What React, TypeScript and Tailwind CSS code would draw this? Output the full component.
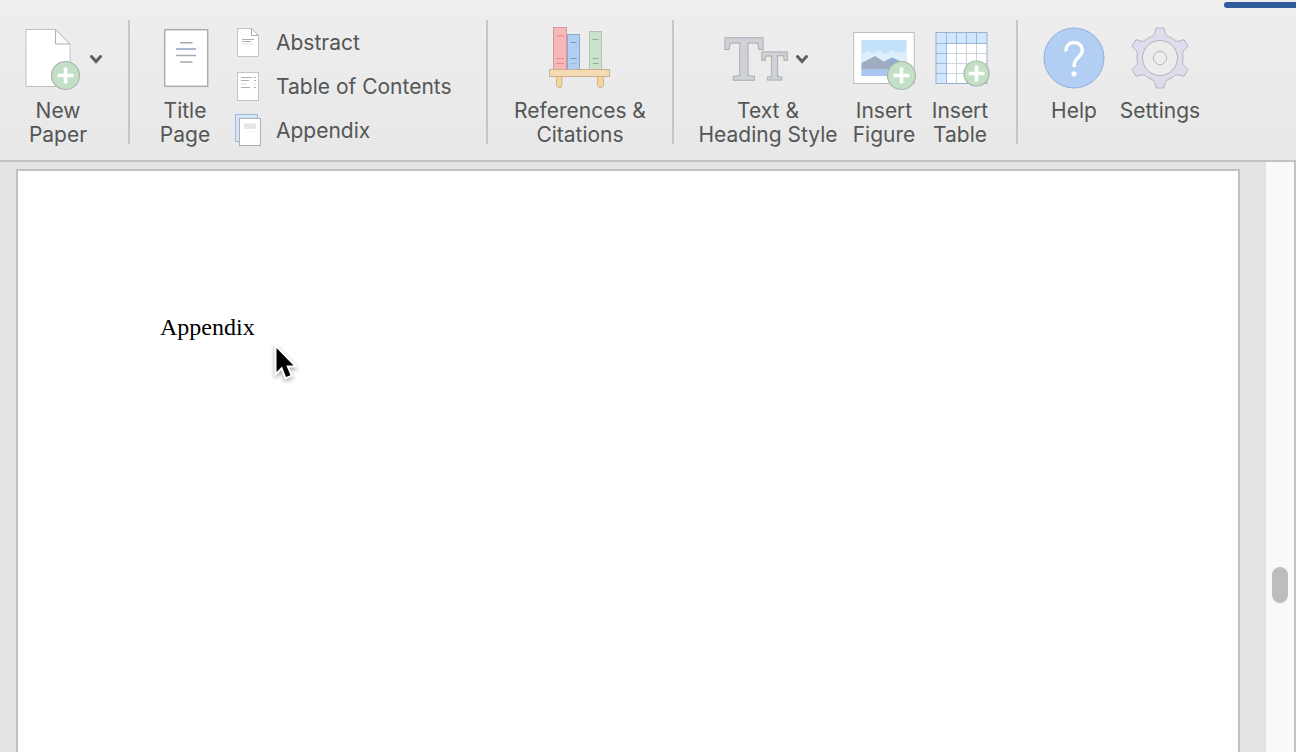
import type { ReactNode } from "react"

function Chevron() {
  return (
    <svg width="16" height="79" viewBox="0 0 16 79" aria-hidden="true">
      <path d="M1.5 36.5 L6 41.5 L10.5 36.5" fill="none" stroke="#5c5e5e" strokeWidth="3" strokeLinecap="round" />
    </svg>
  )
}

function PlusBadge({ cx, cy, r = 14 }: { cx: number; cy: number; r?: number }) {
  return (
    <g>
      <circle cx={cx} cy={cy} r={r} fill="#c3dfc5" stroke="#aab5ac" strokeWidth="1.2" />
      <path d={`M${cx - 8} ${cy}H${cx + 8}M${cx} ${cy - 8}V${cy + 8}`} stroke="#fff" strokeWidth="3.6" />
    </g>
  )
}

function NewPaperIcon() {
  return (
    <svg width="64" height="79" viewBox="0 0 64 79" className="overflow-visible" aria-hidden="true">
      <path d="M0 9.5H29.5L44 24V66.5H0Z" fill="#fff" stroke="#c0c2c2" />
      <path d="M29.5 9.5V24H44Z" fill="#fafafa" stroke="#b0b2b2" />
      <PlusBadge cx={39.5} cy={55.5} />
    </svg>
  )
}

function TitlePageIcon() {
  return (
    <svg width="50" height="79" viewBox="0 0 50 79" aria-hidden="true">
      <rect x="4.7" y="9.7" width="43" height="56.6" fill="#fff" stroke="#a9afaf" strokeWidth="1.5" />
      <path d="M20 22.7H32.5M16 35.5H36M20 42H32.5" stroke="#a5abb0" strokeWidth="1.5" />
      <path d="M16 29H36" stroke="#9fb2cd" strokeWidth="1.8" />
    </svg>
  )
}

function AbstractIcon() {
  return (
    <svg width="30" height="32" viewBox="0 0 30 32" aria-hidden="true">
      <path d="M3.5 2.5H17.5L24.5 9.5V30.5H3.5Z" fill="#fff" stroke="#c2c4c4" />
      <path d="M17.5 2.5V9.5H24.5Z" fill="#fff" stroke="#a9abab" />
      <path d="M8 13.5H20M8 15.500H17" stroke="#adafaf" />
      <path d="M8 18H20" stroke="#e4e4e4" />
    </svg>
  )
}

function ContentsIcon() {
  return (
    <svg width="30" height="32" viewBox="0 0 30 32" aria-hidden="true">
      <rect x="3.5" y="2.5" width="21" height="28" fill="#fff" stroke="#c2c4c4" />
      <path d="M7 7.5H18M7 10.5H15M7 17.5H16M20 7.5H22M20 10.5H22M20 17.5H22" stroke="#adafaf" />
      <path d="M7 14H13M20 14H22" stroke="#dcdcdc" />
    </svg>
  )
}

function AppendixIcon() {
  return (
    <svg width="30" height="34" viewBox="0 0 30 34" aria-hidden="true">
      <rect x="1.5" y="1.5" width="22" height="27" fill="#d3e6f8" stroke="#9dbbdd" />
      <rect x="5.5" y="5.5" width="21" height="27" fill="#fff" stroke="#adb0b2" />
      <rect x="10" y="10.5" width="12" height="5.5" fill="#e6e6e6" />
      <path d="M13 18.5H21" stroke="#f0f0f0" />
    </svg>
  )
}

function ReferencesIcon() {
  return (
    <svg width="64" height="79" viewBox="0 0 64 79" aria-hidden="true">
      <rect x="5.5" y="7.5" width="13" height="42" fill="#f7b7b7" stroke="#cf9c9c" />
      <path d="M8.5 15.5L11 16.5L13 15.5L16 16.5M8.5 38.5H16M8.5 43.5H16" fill="none" stroke="#ee8585" />
      <rect x="19.5" y="14.5" width="12" height="35" fill="#b1cef3" stroke="#8fa8c9" />
      <path d="M22.5 22.5H28.5M22.5 38.5H28.5" stroke="#7f94b1" />
      <path d="M22.5 43.5H28.5" stroke="#9eb7da" />
      <rect x="41.5" y="11.5" width="12" height="38" fill="#c9e4cb" stroke="#b3c0b4" />
      <path d="M44.5 19.5H50.5M44.5 38.5H50.5M44.5 43.5H50.5" stroke="#93ab97" />
      <path
        d="M8.5 56.5V65L10 67.5H13L14 65V56.5ZM49.500 56.5V65L51 67.5H54L55.500 65V56.5Z"
        fill="#f8d596"
        stroke="#c9b79a"
      />
      <rect x="1.5" y="49.5" width="60" height="7" fill="#f3dcb4" stroke="#c8af91" />
    </svg>
  )
}

function TextStyleIcon() {
  return (
    <svg width="64" height="79" viewBox="0 0 64 79" fontFamily="'Liberation Serif', serif" aria-hidden="true">
      <g fill="#a6abb3" stroke="#a6abb3">
        <text x="1" y="58.5" fontSize="62" strokeWidth="3.4">T</text>
        <text x="38" y="58.5" fontSize="41" strokeWidth="3">T</text>
      </g>
      <g fill="#d0d2d6" stroke="#d0d2d6">
        <text x="1" y="58.5" fontSize="62" strokeWidth="1.4">T</text>
        <text x="38" y="58.5" fontSize="41" strokeWidth="1">T</text>
      </g>
    </svg>
  )
}

function FigureIcon() {
  return (
    <svg width="64" height="79" viewBox="0 0 64 79" aria-hidden="true">
      <rect x="1.7" y="12.5" width="60.5" height="51" fill="#fff" stroke="#bcbebe" />
      <rect x="9.5" y="20" width="45" height="36" fill="#c3e2fa" />
      <path d="M9.5 34L16 31L22 33L27 30L33 34L41 30L46 33L54.5 31V46H9.5Z" fill="#deeffb" />
      <path d="M29 43L40 37.5L54.5 44V49H29Z" fill="#91abc9" />
      <path d="M9.5 43L23 36L40 47L54.5 45V50H9.5Z" fill="#a0adc0" />
      <rect x="9.5" y="49" width="45" height="7" fill="#a9c7f1" />
      <PlusBadge cx={49.5} cy={55.5} />
    </svg>
  )
}

function TableIcon() {
  return (
    <svg width="64" height="79" viewBox="0 0 64 79" aria-hidden="true">
      <rect x="8" y="12.5" width="51" height="51" fill="#fff" />
      <path d="M8 12.5H59V23H18V63.5H8Z" fill="#d0e6fb" />
      <path
        d="M18 33.5H59M18 43.5H59M18 53.5H59M28.5 23V63.5M38.5 23V63.5M48.5 23V63.5"
        stroke="#cbd3dc"
      />
      <path
        d="M8 33.5H18M8 43.5H18M8 53.5H18M28.5 12.5V23M38.5 12.5V23M48.5 12.5V23M8 23.5H59M18.500 12.5V63.5"
        stroke="#98b8de"
      />
      <rect x="8" y="12.5" width="51" height="51" fill="none" stroke="#9ab2d2" />
      <PlusBadge cx={48.5} cy={53.5} r={12.5} />
    </svg>
  )
}

function HelpIcon() {
  return (
    <svg width="64" height="79" viewBox="0 0 64 79" aria-hidden="true">
      <circle cx="32" cy="38" r="30" fill="#b2cef3" stroke="#8fb0dc" />
      <path
        d="M23.8 31.5C23.8 26 27 22.5 32 22.5C37 22.5 40.3 25.8 40.3 30C40.3 37 32.3 38 32.3 44.5V47"
        fill="none"
        stroke="#fff"
        strokeWidth="3.4"
      />
      <circle cx="32" cy="53.8" r="2.6" fill="#fff" />
    </svg>
  )
}

// Six teeth on a ring of radius 23, one every 60 degrees
function gearPath(cx: number, cy: number) {
  const tooth = [[-7, -22], [-5.2, -24.5], [-4, -30], [4, -30], [5.2, -24.5], [7, -22]]
  let d = ""
  for (let i = 0; i < 6; i++) {
    const a = (i * Math.PI) / 3
    tooth.forEach(([x, y], n) => {
      const px = (cx + x * Math.cos(a) - y * Math.sin(a)).toFixed(2)
      const py = (cy + x * Math.sin(a) + y * Math.cos(a)).toFixed(2)
      if (n === 0) d += i === 0 ? `M${px} ${py}` : `A23 23 0 0 1 ${px} ${py}`
      else d += `L${px} ${py}`
    })
  }
  return d + `A23 23 0 0 1 ${cx - 7} ${cy - 22}Z`
}

function SettingsIcon() {
  return (
    <svg width="64" height="79" viewBox="0 0 64 79" aria-hidden="true">
      <path d={gearPath(32, 38)} fill="#dfdcee" stroke="#b7b5bd" strokeLinejoin="round" />
      <circle cx="32" cy="38" r="17.5" fill="#ececec" stroke="#b2b1b6" />
      <circle cx="32" cy="38" r="6.7" fill="#ececec" stroke="#b8b8bb" />
    </svg>
  )
}

function Divider() {
  return <div className="h-[124px] w-0.5 shrink-0 bg-[#c6c6c6]" />
}

function RibbonButton({ icon, lines, className }: { icon: ReactNode; lines: string[]; className: string }) {
  return (
    <button type="button" className={`flex shrink-0 flex-col items-center ${className}`}>
      <span className="flex gap-2">{icon}</span>
      {lines.map((line) => (
        <span key={line} className="whitespace-nowrap">
          {line}
        </span>
      ))}
    </button>
  )
}

function ListButton({ icon, label }: { icon: ReactNode; label: string }) {
  return (
    <button type="button" className="flex h-11 items-center gap-3 whitespace-nowrap">
      {icon}
      <span className="pt-0.5">{label}</span>
    </button>
  )
}

function Ribbon() {
  return (
    <header className="relative flex h-[162px] items-start overflow-hidden border-b-2 border-[#c2c2c2] bg-linear-to-b from-[#eeeeee] to-[#e8e8e8] pt-5 font-['Inter',sans-serif] text-[21px] leading-6 text-[#545656]">
      <div className="absolute top-0.5 right-0 h-1.5 w-[72px] rounded-l-full bg-[#2f5a9c]" />

      <div className="flex w-32 shrink-0 pl-[26px]">
        <RibbonButton icon={<NewPaperIcon />} lines={["New", "Paper"]} className="w-16" />
        <button type="button" aria-label="New paper options" className="self-start">
          <Chevron />
        </button>
      </div>
      <Divider />

      <div className="flex w-[356px] shrink-0 gap-6 pl-[30px]">
        <RibbonButton icon={<TitlePageIcon />} lines={["Title", "Page"]} className="w-[50px]" />
        <div className="flex flex-col">
          <ListButton icon={<AbstractIcon />} label="Abstract" />
          <ListButton icon={<ContentsIcon />} label="Table of Contents" />
          <ListButton icon={<AppendixIcon />} label="Appendix" />
        </div>
      </div>
      <Divider />

      <RibbonButton icon={<ReferencesIcon />} lines={["References &", "Citations"]} className="w-[184px]" />
      <Divider />

      <div className="flex w-[342px] shrink-0 gap-3.5 pl-6">
        <RibbonButton
          icon={
            <>
              <TextStyleIcon />
              <Chevron />
            </>
          }
          lines={["Text &", "Heading Style"]}
          className="w-[140px]"
        />
        <div className="flex gap-3">
          <RibbonButton icon={<FigureIcon />} lines={["Insert", "Figure"]} className="w-16" />
          <RibbonButton icon={<TableIcon />} lines={["Insert", "Table"]} className="w-16" />
        </div>
      </div>
      <Divider />

      <div className="flex gap-3 pl-6">
        <RibbonButton icon={<HelpIcon />} lines={["Help"]} className="w-16" />
        <RibbonButton icon={<SettingsIcon />} lines={["Settings"]} className="w-[84px]" />
      </div>
    </header>
  )
}

function Pointer() {
  return (
    <svg
      className="absolute top-[340px] left-[270px] drop-shadow-[0_2px_2px_rgba(0,0,0,0.35)]"
      width="32"
      height="44"
      viewBox="0 0 32 44"
      aria-hidden="true"
    >
      <path
        d="M6.500 8V32L12 26.500L16 37L20.500 35.200L16.300 25.500H23.500Z"
        fill="#000"
        stroke="#fff"
        strokeWidth="4"
        paintOrder="stroke"
      />
    </svg>
  )
}

export default function App() {
  return (
    <div className="relative flex min-h-screen flex-col bg-[#e3e3e3]">
      <Ribbon />
      <div className="flex flex-1">
        <main className="flex flex-1 pt-[7px] pr-[26px] pl-4">
          <article className="flex-1 border-2 border-b-0 border-[#bfc1c1] bg-white px-[142px] pt-[142px]">
            <p className="font-['Liberation_Serif',serif] text-2xl leading-7 text-black">Appendix</p>
          </article>
        </main>
        <div className="w-[30px] border-r-2 border-[#c2c4c4] bg-[#f9f9f9] px-1.5 pt-[405px]">
          <div className="h-9 w-4 rounded-full bg-[#bcbebe]" />
        </div>
      </div>
      <Pointer />
    </div>
  )
}
